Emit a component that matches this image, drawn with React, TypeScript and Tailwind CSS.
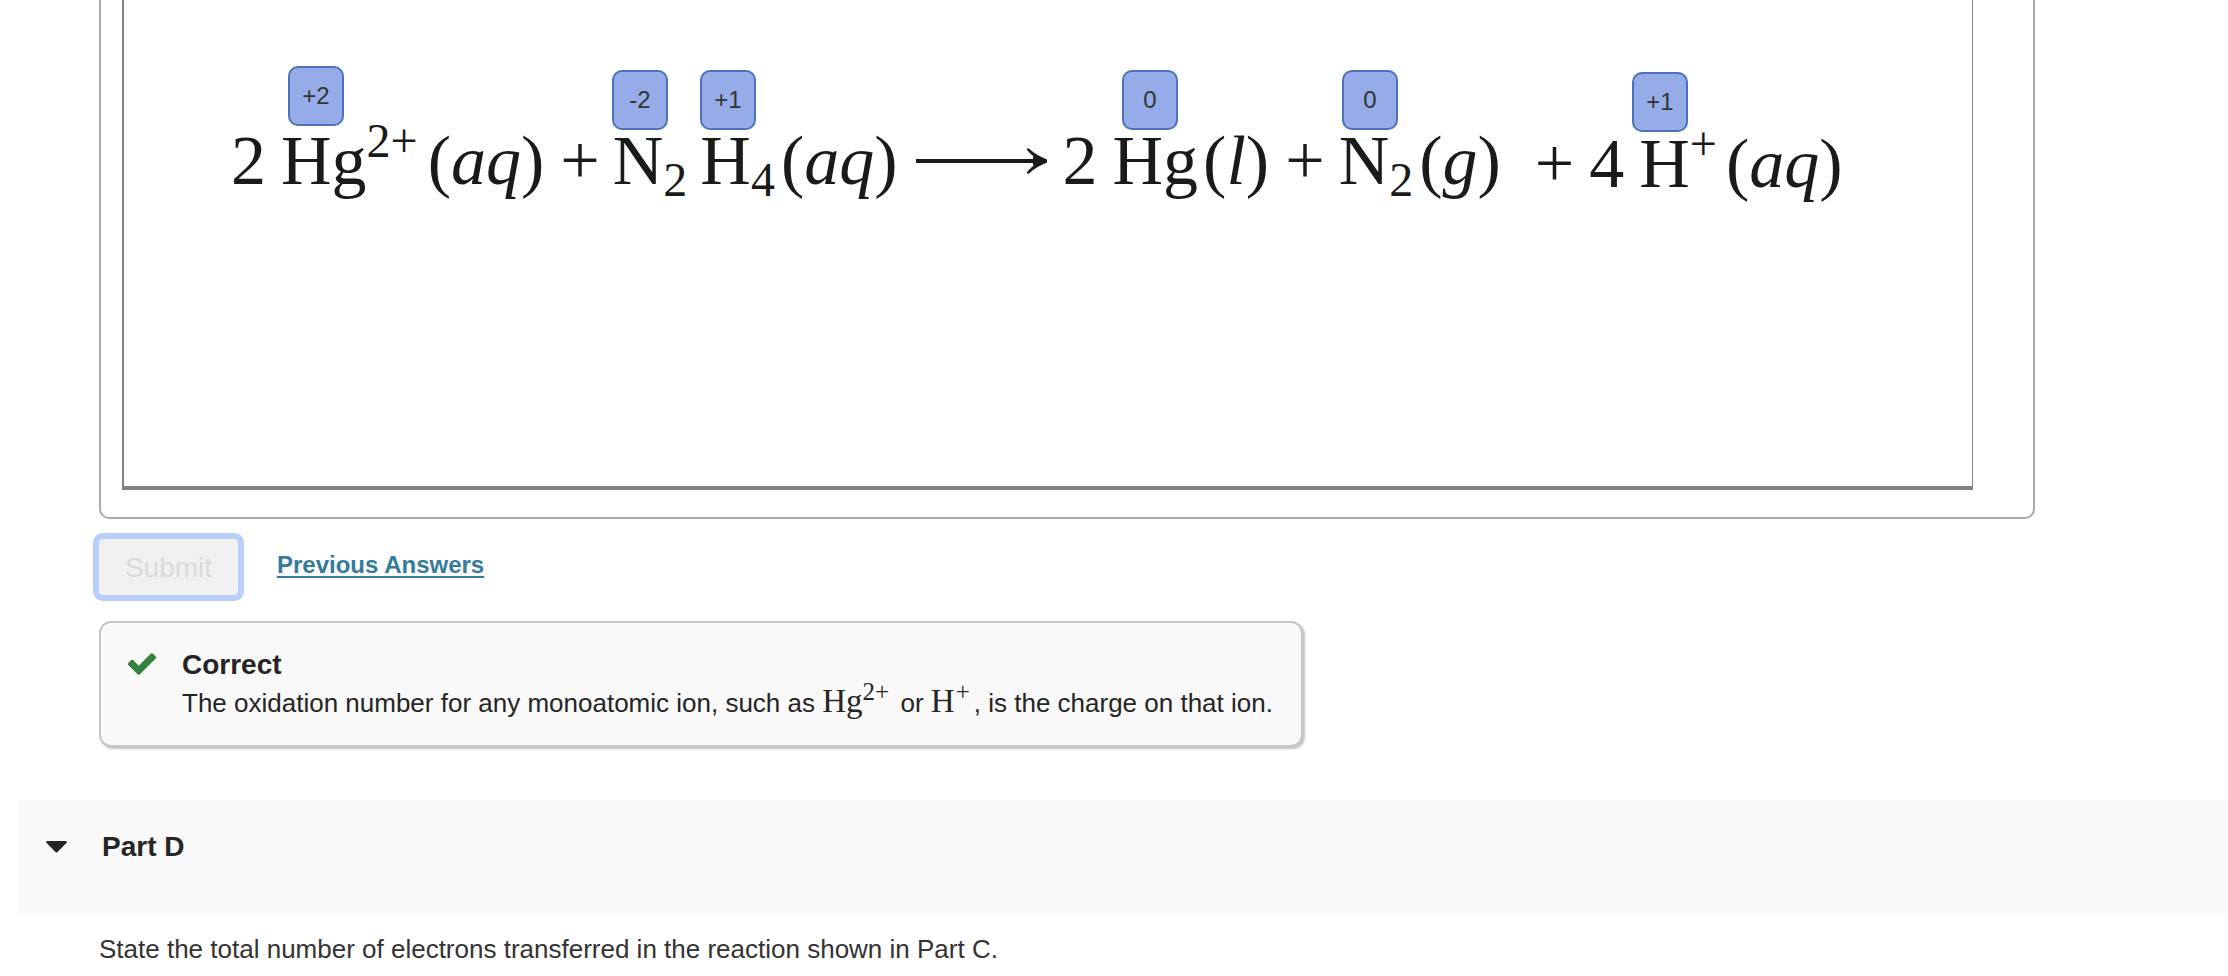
import { useState } from 'react'

type Chip = {
  id: string
  value: string
  place: string
}

// Oxidation number labels dropped on the canvas
const chips: Chip[] = [
  { id: 'hg-ion', value: '+2', place: 'left-[164px] top-[66px]' },
  { id: 'n-hydrazine', value: '-2', place: 'left-[488px] top-[70px]' },
  { id: 'h-hydrazine', value: '+1', place: 'left-[576px] top-[70px]' },
  { id: 'hg-liquid', value: '0', place: 'left-[998px] top-[70px]' },
  { id: 'n-gas', value: '0', place: 'left-[1218px] top-[70px]' },
  { id: 'h-ion', value: '+1', place: 'left-[1508px] top-[72px]' },
]

const Sup = ({ children }: { children: string }) => (
  <sup className="top-0 -translate-y-[27px] text-[48px] leading-none">{children}</sup>
)

const Sub = ({ children }: { children: string }) => (
  <sub className="bottom-0 translate-y-3 text-[48px] leading-none">{children}</sub>
)

const Phase = ({ children, className }: { children: string; className: string }) => (
  <span className={className}>
    (<i>{children}</i>)
  </span>
)

const Arrow = () => (
  <svg className="ml-[18px] h-7 w-[131px] self-center" viewBox="0 0 131 28" fill="none" aria-label="yields">
    <path d="M0 14H124" stroke="#1a1a1a" strokeWidth="4" />
    <path d="M111 2C115 8 121 12 131 14C121 16 115 20 111 26L113 26C118 21 124 18 131 15V13C124 10 118 7 113 2Z" fill="#1a1a1a" stroke="#1a1a1a" strokeWidth="1" />
    <path d="M117 9L131 14L117 19Z" fill="#1a1a1a" />
  </svg>
)

const Equation = () => (
  <div className="flex items-baseline whitespace-nowrap pl-[107px] pt-[121px] font-['Liberation_Serif',serif] text-[70px] leading-[80px] text-[#1a1a1a]">
    <span>2</span>
    <span className="ml-[15px]">Hg</span>
    <Sup>2+</Sup>
    <Phase className="ml-[10px]">aq</Phase>
    <span className="ml-4">+</span>
    <span className="ml-[13px]">N</span>
    <Sub>2</Sub>
    <span className="ml-[13px]">H</span>
    <Sub>4</Sub>
    <Phase className="ml-[6px]">aq</Phase>
    <Arrow />
    <span className="ml-4">2</span>
    <span className="ml-[15px]">Hg</span>
    <Phase className="ml-[5px]">l</Phase>
    <span className="ml-[16px]">+</span>
    <span className="ml-[14px]">N</span>
    <Sub>2</Sub>
    <Phase className="ml-[6px]">g</Phase>
    <div className="ml-[34px] flex translate-y-[3px] items-baseline">
      <span>+</span>
      <span className="ml-[15px]">4</span>
      <span className="ml-[15px]">H</span>
      <Sup>+</Sup>
      <Phase className="ml-[9px]">aq</Phase>
    </div>
  </div>
)

const Feedback = () => (
  <section className="ml-[99px] mt-[26px] flex w-fit items-start rounded-[12px] border-2 border-[#c6c6c6] bg-[#f9f9f9] pb-5 pl-[27px] pr-7 pt-[26px] shadow-[2px_2px_2px_#c4c4c4]">
    <svg className="mt-1 h-[22px] w-7" viewBox="121 334 1550 1188" fill="#36803e" aria-hidden="true">
      <path d="M1671 566q0 40-28 68l-724 724-136 136q-28 28-68 28t-68-28l-136-136-362-362q-28-28-28-68t28-68l136-136q28-28 68-28t68 28l294 295 656-657q28-28 68-28t68 28l136 136q28 28 28 68z" />
    </svg>
    <div className="ml-[26px] text-[#252525]">
      <h3 className="text-[28px] font-bold leading-8">Correct</h3>
      <p className="whitespace-nowrap text-[26px] leading-[44px]">
        The oxidation number for any monoatomic ion, such as{' '}
        <span className="mr-1 font-['Liberation_Serif',serif] text-[33px] leading-none">
          Hg<sup className="text-[25px]">2+</sup>
        </span>{' '}
        or{' '}
        <span className="mr-1 font-['Liberation_Serif',serif] text-[33px] leading-none">
          H<sup className="ml-px text-[25px]">+</sup>
        </span>
        , is the charge on that ion.
      </p>
    </div>
  </section>
)

const App = () => {
  const [isOpen, setIsOpen] = useState(true)

  return (
    <main className="bg-white font-['Liberation_Sans',Arial,sans-serif]">
      <div className="ml-[99px] mr-[193px] rounded-b-[10px] border-2 border-t-0 border-[#a9a9a9] pb-[27px] pl-[21px] pr-[60px]">
        <div className="relative h-[490px] border-b-4 border-l-2 border-r border-[#808080]">
          <Equation />
          {chips.map((chip) => (
            <button
              key={chip.id}
              type="button"
              className={`absolute flex h-[60px] w-14 items-center justify-center rounded-[10px] border-2 border-[#4c72b8] bg-[#95ace8] text-2xl text-[#333] ${chip.place}`}
            >
              {chip.value}
            </button>
          ))}
        </div>
      </div>

      <div className="ml-[99px] mt-5 flex items-center">
        <button
          type="button"
          disabled
          className="h-14 w-[139px] rounded-[4px] bg-[#f0f0f0] pt-px text-[28px] text-[#dadada] ring-6 ring-[#b9cefa]"
        >
          Submit
        </button>
        <a
          href="#previous"
          className="-mt-1 ml-[39px] text-2xl font-bold text-[#357b9c] underline decoration-2 underline-offset-3"
        >
          Previous Answers
        </a>
      </div>

      <Feedback />

      <section className="mt-[53px]">
        <h2 className="ml-[18px] bg-[#f9f9f9] pb-[50px] pt-[31px]">
          <button
            type="button"
            aria-expanded={isOpen}
            onClick={() => setIsOpen(!isOpen)}
            className="flex items-center pl-7 text-[28px] font-bold leading-8 text-[#252525]"
          >
            <svg className="mr-[35px] h-3 w-[21px]" viewBox="0 0 21 12" fill="#252525" aria-hidden="true">
              <path d="M1 0H20Q21.500 .8 20.400 2L11.500 11Q10.500 12 9.500 11L.6 2Q-.5.8 1 0Z" />
            </svg>
            Part D
          </button>
        </h2>
        {isOpen && (
          <p className="ml-[99px] mt-5 text-[26px] leading-8 text-[#333]">
            State the total number of electrons transferred in the reaction shown in Part C.
          </p>
        )}
      </section>
    </main>
  )
}

export default App
